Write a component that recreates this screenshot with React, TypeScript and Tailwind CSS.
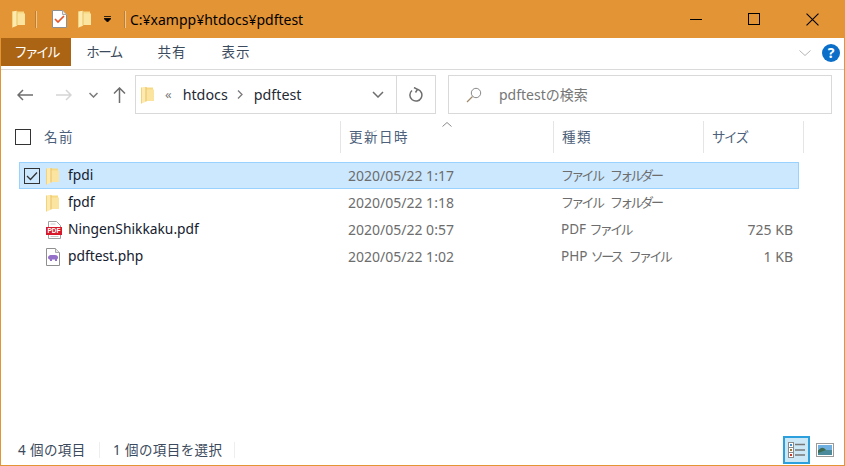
import React from 'react';

const FONT = '"Noto Sans", "Noto Sans CJK JP", sans-serif';

const Folder = ({ className = '' }: { className?: string }) => (
  <svg viewBox="0 0 13 18" className={`w-[13px] h-[18px] shrink-0 ${className}`}>
    <path d="M2 1.500h10v13.500H2z" fill="#f7d983" />
    <path d="M5 3.500h8V15H5z" fill="#fbe4a0" />
    <path d="M.5 1.500 5 .8v15L.5 17.500z" fill="#fdeab0" />
    <path d="M5 1v14.500" stroke="#e9c165" strokeWidth="1" />
    <path d="M.5 1.500v16" stroke="#f4d27a" strokeWidth="1" />
  </svg>
);

const Sep = () => <div className="w-[2px] h-[17px] bg-[#c07f30] border-r border-[#efc48f]" />;

const FileChecklist = () => (
  <svg viewBox="0 0 15 18" className="w-[15px] h-[18px]">
    <path d="M.5.5h10l4 4v13H.5z" fill="#fff" stroke="#8f8f8f" />
    <path d="M10.500.5v4h4" fill="#e8e8e8" stroke="#a8a8a8" />
    <path d="m3 9 3 3 6-6" fill="none" stroke="#e4572a" strokeWidth="1.700" />
  </svg>
);

const PdfIcon = () => (
  <svg viewBox="0 0 16 18" className="w-[16px] h-[18px] shrink-0">
    <path d="M2.500.5h8l4 4v13h-12z" fill="#fff" stroke="#a0a0a0" />
    <path d="M4.500 3h5M4.500 15.500h8" stroke="#c8c8c8" />
    <rect x="0" y="6" width="16" height="8" fill="#d6182a" />
    <text x="8" y="12.400" textAnchor="middle" fontSize="6.500" fontWeight="700" fill="#fff" fontFamily="Liberation Sans, sans-serif">PDF</text>
  </svg>
);

const PhpIcon = () => (
  <svg viewBox="0 0 14 18" className="w-[14px] h-[18px] shrink-0">
    <path d="M.5.5h9l4 4v13H.5z" fill="#fff" stroke="#8f8f8f" />
    <path d="M9.500.5v4h4" fill="#e8e8e8" stroke="#a8a8a8" />
    <path d="M2 9.500C2 7.500 4 7 6 7h3c2 0 3 1 3 2.500 0 1-.5 1.500-1 1.800V13H9v-1.500H6V13H4v-1.500C3 11.500 2 11 2 9.500z" fill="#9470c8" />
  </svg>
);

const HeaderCell = ({ label, width, first, tight }: { label: string; width: string; first?: boolean; tight?: boolean }) => (
  <div
    className={`${width} h-[32px] flex items-center border-r border-[#e5e5e5] ${first ? 'pl-[13px]' : 'pl-[8px]'} text-[13.5px] text-[#4c607a] ${tight ? 'tracking-[-1.500px]' : 'tracking-[1.500px]'}`}
  >
    {label}
  </div>
);

type Row = { name: string; date: string; prefix?: string; type: string; size?: string; icon: React.ReactNode; selected?: boolean };

const rows: Row[] = [
  { name: 'fpdi', date: '2020/05/22 1:17', type: 'ファイル フォルダー', icon: <Folder />, selected: true },
  { name: 'fpdf', date: '2020/05/22 1:18', type: 'ファイル フォルダー', icon: <Folder /> },
  { name: 'NingenShikkaku.pdf', date: '2020/05/22 0:57', prefix: 'PDF ', type: 'ファイル', size: '725 KB', icon: <PdfIcon /> },
  { name: 'pdftest.php', date: '2020/05/22 1:02', prefix: 'PHP ', type: 'ソース ファイル', size: '1 KB', icon: <PhpIcon /> },
];

export default function App() {
  return (
    <div className="w-[845px] h-[466px] flex flex-col bg-white border-x border-b border-[#e39435] overflow-hidden" style={{ fontFamily: FONT }}>
      {/* title bar */}
      <div className="h-[38px] -mx-px bg-[#e39435] flex items-center pl-[12px] shrink-0">
        <Folder />
        <div className="ml-[10px]"><Sep /></div>
        <div className="ml-[15px]"><FileChecklist /></div>
        <Folder className="ml-[11px]" />
        <svg viewBox="0 0 8 7" className="w-[7px] h-[6px] ml-[13px]">
          <path d="M0 .5h8M0 3h8L4 7z" stroke="#000" fill="#000" strokeWidth="1" />
        </svg>
        <div className="ml-[13px]"><Sep /></div>
        <span className="ml-[4px] text-[14px] text-black">C:¥xampp¥htdocs¥pdftest</span>
        <div className="ml-auto flex items-center pr-[26px]">
          <div className="w-[12px] h-px bg-black mr-[46px]" />
          <div className="w-[12px] h-[12px] border border-black mr-[46px]" />
          <svg viewBox="0 0 12 12" className="w-[13px] h-[13px]">
            <path d="m.5.5 11 11m0-11-11 11" stroke="#000" strokeWidth="1" fill="none" />
          </svg>
        </div>
      </div>

      {/* ribbon tabs */}
      <div className="h-[32px] flex border-b border-[#dadada] shrink-0 text-[13.5px] text-[#3b4a5c]">
        <div className="w-[70px] h-[28px] bg-[#ab6413] text-white flex items-center justify-center tracking-[-2.500px]">ファイル</div>
        <div className="w-[66px] h-[28px] flex items-center justify-center tracking-[-1.500px]">ホーム</div>
        <div className="w-[70px] h-[28px] flex items-center justify-center tracking-[1px]">共有</div>
        <div className="w-[58px] h-[28px] flex items-center justify-center tracking-[1px]">表示</div>
        <div className="ml-auto flex items-center pb-[2px] pr-[4px]">
          <svg viewBox="0 0 12 6" className="w-[12px] h-[6px]">
            <path d="m.5.5 5.500 5 5.500-5" stroke="#b5b5b5" fill="none" />
          </svg>
          <div className="ml-[11px] w-[18px] h-[18px] rounded-full bg-[#0b6fc9] text-white text-[14px] font-bold flex items-center justify-center leading-none">?</div>
        </div>
      </div>

      {/* nav row */}
      <div className="h-[50px] pt-[5px] flex items-start shrink-0">
        <div className="h-[39px] w-[134px] flex items-center pl-[16px]">
          <svg viewBox="0 0 16 12" className="w-[16px] h-[12px]">
            <path d="M16 6H1m5-5L1 6l5 5" stroke="#6e6e6e" strokeWidth="1.500" fill="none" />
          </svg>
          <svg viewBox="0 0 16 12" className="w-[16px] h-[12px] ml-[23px]">
            <path d="M0 6h15m-5-5 5 5-5 5" stroke="#d5d5d5" strokeWidth="1.500" fill="none" />
          </svg>
          <svg viewBox="0 0 9 6" className="w-[9px] h-[6px] ml-[17px]">
            <path d="m.5 1 4 4 4-4" stroke="#7a7a7a" strokeWidth="1.500" fill="none" />
          </svg>
          <svg viewBox="0 0 13 16" className="w-[13px] h-[16px] ml-[15px]">
            <path d="M6.500 16V1M1 6.500l5.500-5.500 5.500 5.500" stroke="#6e6e6e" strokeWidth="1.500" fill="none" />
          </svg>
        </div>
        <div className="w-[301px] h-[39px] border border-[#d9d9d9] flex items-center text-[14.300px] text-[#1f2a36]">
          <Folder className="ml-[5px]" />
          <span className="ml-[11px] text-[13px] text-[#7a7a7a] leading-none">«</span>
          <span className="ml-[11px]">htdocs</span>
          <svg viewBox="0 0 6 9" className="w-[6px] h-[9px] ml-[9px]">
            <path d="m1 .5 4 4-4 4" stroke="#7a7a7a" strokeWidth="1.300" fill="none" />
          </svg>
          <span className="ml-[11px]">pdftest</span>
          <svg viewBox="0 0 12 7" className="w-[12px] h-[7px] ml-auto mr-[12px]">
            <path d="m1 1 5 5 5-5" stroke="#6e6e6e" strokeWidth="1.500" fill="none" />
          </svg>
          <div className="w-[39px] h-full border-l border-[#d9d9d9] flex items-center justify-center">
            <svg viewBox="0 0 16 16" className="w-[16px] h-[16px]">
              <path d="M9.500 2.300A6 6 0 1 1 4 3.500M9.500 2.300 6 .5M9.500 2.300 7.500 5.500" stroke="#6e6e6e" strokeWidth="1.500" fill="none" />
            </svg>
          </div>
        </div>
        <div className="ml-[12px] w-[384px] h-[39px] border border-[#d9d9d9] flex items-center pl-[17px] text-[14px] text-[#767676]">
          <svg viewBox="0 0 16 16" className="w-[16px] h-[16px]">
            <circle cx="10" cy="6" r="4.700" stroke="#8a8a8a" fill="none" />
            <path d="M6.500 9.500 1 15" stroke="#a08a6a" strokeWidth="1.200" />
          </svg>
          <span className="ml-[17px]">pdftestの検索</span>
        </div>
      </div>

      {/* column header */}
      <div className="relative h-[32px] mt-px flex items-center shrink-0 pl-[14px]">
        <div className="w-[16px] h-[16px] border border-[#333] shrink-0" />
        <HeaderCell label="名前" width="w-[310px]" first />
        <HeaderCell label="更新日時" width="w-[213px]" />
        <HeaderCell label="種類" width="w-[150px]" />
        <HeaderCell label="サイズ" width="w-[100px]" tight />
        <svg viewBox="0 0 10 5" className="absolute left-[441px] top-[1px] w-[10px] h-[5px]">
          <path d="m.5 4.500 4.500-4 4.500 4" stroke="#8a8a8a" fill="none" />
        </svg>
      </div>

      {/* file list */}
      <div className="flex-1 pt-[9px] pl-[18px]">
        {rows.map(row => (
          <div
            key={row.name}
            className={`w-[780px] h-[27px] flex items-center border text-[14px] ${row.selected ? 'bg-[#cce8ff] border-[#99d1ff]' : 'border-transparent'}`}
          >
            <div className="w-[26px] shrink-0 pl-[4px]">
              {row.selected && (
                <div className="w-[16px] h-[16px] border border-[#333] flex items-center justify-center">
                  <svg viewBox="0 0 12 10" className="w-[12px] h-[10px]">
                    <path d="m1 5 3.500 3.500L11 1.500" stroke="#333" strokeWidth="1.300" fill="none" />
                  </svg>
                </div>
              )}
            </div>
            <div className="w-[22px] flex justify-start shrink-0">{row.icon}</div>
            <div className="w-[280px] shrink-0 text-[13.800px] text-[#15202e] whitespace-nowrap">{row.name}</div>
            <div className="w-[213px] shrink-0 text-[#6d6d6d]">{row.date}</div>
            <div className="w-[150px] shrink-0 text-[#6d6d6d] text-[13.500px] whitespace-pre">
              {row.prefix}
              <span className="text-[13px] tracking-[-2.700px] [word-spacing:7px]">{row.type}</span>
            </div>
            <div className="w-[82px] shrink-0 text-right text-[#6d6d6d]">{row.size}</div>
          </div>
        ))}
      </div>

      {/* status bar */}
      <div className="h-[30px] flex items-center shrink-0 pl-[17px] text-[13.500px] text-[#3b4a5c] tracking-[0.400px]">
        <span className="w-[81px]">4 個の項目</span>
        <div className="w-px h-[16px] bg-[#eeeeee]" />
        <span className="ml-[13px] w-[121px]">1 個の項目を選択</span>
        <div className="w-px h-[16px] bg-[#eeeeee]" />
        <div className="ml-auto flex items-center pr-[10px]">
          <div className="w-[27px] h-[28px] border-2 border-[#2ca0dc] bg-[#cce8f7] flex items-center justify-center">
            <svg viewBox="0 0 17 16" className="w-[17px] h-[16px]">
              <rect x=".5" y=".5" width="5" height="15" fill="#fff" stroke="#8a8a8a" />
              <path d="M1 5.500h4M1 10.500h4" stroke="#8a8a8a" />
              <rect x="2" y="2" width="2" height="2" fill="#3f8fd0" />
              <rect x="2" y="7" width="2" height="2" fill="#9a7b3a" />
              <rect x="2" y="12" width="2" height="2" fill="#c83a2a" />
              <path d="M7 2.500h10M7 8h10M7 13h10" stroke="#777" strokeWidth="1.300" />
            </svg>
          </div>
          <svg viewBox="0 0 18 14" className="w-[18px] h-[14px] ml-[6px]">
            <rect x=".5" y=".5" width="17" height="13" fill="#fff" stroke="#9a9a9a" />
            <rect x="2" y="2" width="14" height="5" fill="#6fb0e0" />
            <rect x="2" y="7" width="14" height="5" fill="#4a8a9a" />
            <path d="M2 8c3-4 5-4 8-1l-8 3z" fill="#3f6a4f" />
          </svg>
        </div>
      </div>
    </div>
  );
}
